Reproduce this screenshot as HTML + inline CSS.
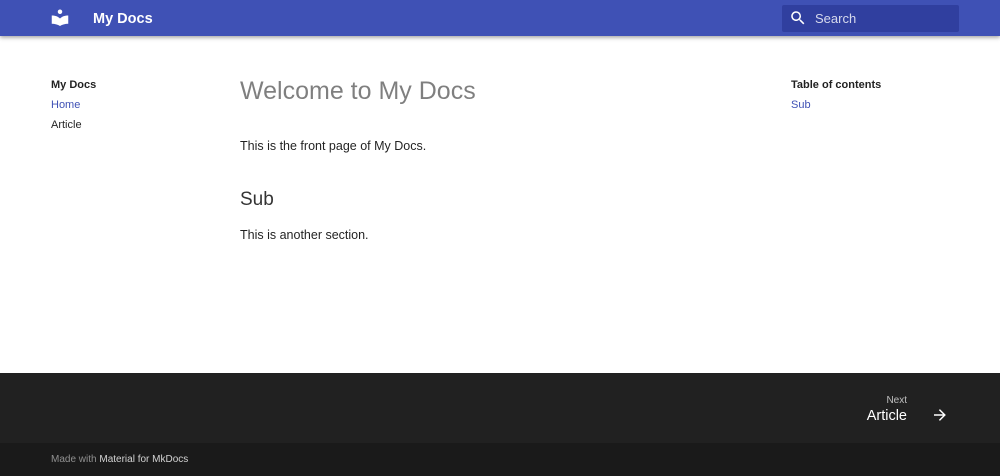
<!DOCTYPE html><html><head><meta charset="utf-8"><style>
*{margin:0;padding:0;box-sizing:border-box}
body{width:1000px;height:476px;overflow:hidden;font-family:"Liberation Sans",sans-serif;background:#fff;position:relative;color:rgba(0,0,0,.87)}
.hdr{position:absolute;top:0;left:0;width:1000px;height:36px;background:#3f51b5;box-shadow:0 0 4px rgba(0,0,0,.2),0 2px 4px rgba(0,0,0,.25)}
.title{position:absolute;left:93px;top:11px;color:#fff;font-weight:bold;font-size:14.5px}
.search{position:absolute;left:782px;top:5px;width:177px;height:27px;background:#303f9f;border-radius:2px}
.search span{position:absolute;left:33px;top:6px;color:rgba(255,255,255,.8);font-size:13px}
.a{position:absolute;font-size:11px}
h1{position:absolute;left:240px;top:77px;font-weight:300;font-size:25px;color:rgba(0,0,0,.5)}
h2{position:absolute;left:240px;top:189px;font-weight:300;font-size:19px;color:rgba(0,0,0,.8)}
.p{position:absolute;left:240px;font-size:12.5px}
.f1{position:absolute;top:373px;left:0;width:1000px;height:70px;background:#212121}
.f2{position:absolute;top:443px;left:0;width:1000px;height:33px;background:#1a1a1a}
</style></head><body>
<div class="hdr">
<svg style="position:absolute;left:51px;top:8px" width="18" height="18" viewBox="0 0 24 24"><path fill="#fff" d="M12 2a3 3 0 1 1 0 6 3 3 0 0 1 0-6zM1 10c4 0 8 1 11 4 3-3 7-4 11-4v11c-4 0-8 1-11 3-3-2-7-3-11-3z"/></svg>
<div class="title">My Docs</div>
<div class="search"><svg style="position:absolute;left:7px;top:4px" width="18" height="18" viewBox="0 0 24 24"><path fill="#fff" d="M9.5 3A6.5 6.5 0 0 1 16 9.5c0 1.6-.6 3.1-1.6 4.2l.3.3h.8l5 5-1.5 1.5-5-5v-.8l-.3-.3A6.5 6.5 0 1 1 9.5 3m0 2a4.5 4.5 0 1 0 0 9 4.5 4.5 0 0 0 0-9z"/></svg><span>Search</span></div>
</div>
<div class="a" style="left:51px;top:79px;font-weight:bold">My Docs</div>
<div class="a" style="left:51px;top:99px;color:#3f51b5">Home</div>
<div class="a" style="left:51px;top:119px">Article</div>
<div class="a" style="left:791px;top:79px;font-weight:bold">Table of contents</div>
<div class="a" style="left:791px;top:99px;color:#3f51b5">Sub</div>
<h1>Welcome to My Docs</h1>
<div class="p" style="top:139px">This is the front page of My Docs.</div>
<h2>Sub</h2>
<div class="p" style="top:228px">This is another section.</div>
<div class="f1">
<div style="position:absolute;right:93px;top:22px;font-size:10px;color:rgba(255,255,255,.7)">Next</div>
<div style="position:absolute;right:93px;top:35px;font-size:14.5px;color:#fff">Article</div>
<svg style="position:absolute;left:931px;top:33px" width="18" height="18" viewBox="0 0 24 24"><path fill="#fff" d="M4 11v2h12l-5.5 5.5 1.4 1.4L19.8 12l-7.9-7.9-1.4 1.4L16 11z"/></svg>
</div>
<div class="f2"><div style="position:absolute;left:51px;top:11px;font-size:10px;color:rgba(255,255,255,.5)">Made with <span style="color:rgba(255,255,255,.8)">Material for MkDocs</span></div></div>
</body></html>
